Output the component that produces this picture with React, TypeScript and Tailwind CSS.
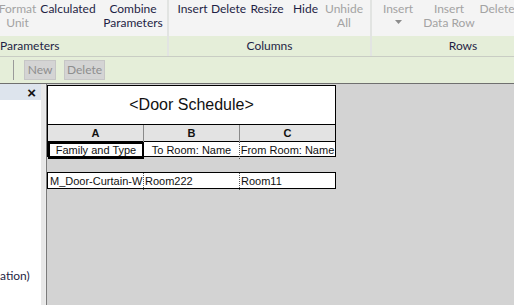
import React from "react";

const font = { fontFamily: 'Lato, "Noto Sans", sans-serif' };
const arial = { fontFamily: '"Liberation Sans", Arial, sans-serif' };

function RibbonButton({ w, lines, off }: { w: string; lines: string[]; off?: boolean }) {
  return (
    <div
      className={`${w} flex shrink-0 flex-col items-center pt-[2px] text-[12px] leading-[14px] whitespace-nowrap ${
        off ? "text-[#a3a3a3]" : "text-[#1f1f45]"
      }`}
    >
      {lines.map((l, i) => (
        <div key={i} className="flex w-full justify-center">
          {l}
        </div>
      ))}
    </div>
  );
}

function Group({
  w,
  label,
  children,
  last,
  left,
}: {
  w: string;
  label: string;
  children: React.ReactNode;
  last?: boolean;
  left?: boolean;
}) {
  return (
    <div className={`${w} flex shrink-0 flex-col ${last ? "" : "border-r-2 border-[#e2e4e2]"}`}>
      <div className="flex h-[36px] bg-[#f4f4f4]">{children}</div>
      <div
        className={`flex h-[20px] items-center bg-[#e5eed9] text-[12px] text-[#1f1f45] ${
          left ? "justify-start" : "justify-center"
        }`}
      >
        {label}
      </div>
    </div>
  );
}

export default function App() {
  return (
    <div className="flex h-[305px] w-[514px] flex-col overflow-hidden bg-[#d3d3d3]" style={font}>
      {/* ribbon */}
      <div className="flex h-[57px] shrink-0 border-b border-[#c9cdc4]">
        <Group w="w-[169px]" label="Parameters" left>
          <div className="ml-[-1px] flex">
            <RibbonButton w="w-[37px]" lines={["Format", "Unit"]} off />
            <RibbonButton w="w-[64px]" lines={["Calculated"]} />
            <RibbonButton w="w-[66px]" lines={["Combine", "Parameters"]} />
          </div>
        </Group>
        <Group w="w-[203px]" label="Columns">
          <RibbonButton w="w-[47px]" lines={["Insert"]} />
          <RibbonButton w="w-[25px]" lines={["Delete"]} />
          <RibbonButton w="w-[52px]" lines={["Resize"]} />
          <RibbonButton w="w-[25px]" lines={["Hide"]} />
          <RibbonButton w="w-[52px]" lines={["Unhide", "All"]} off />
        </Group>
        <Group w="w-[182px]" label="Rows" last>
          <div className="flex w-[52px] shrink-0 flex-col items-center pt-[2px] text-[12px] leading-[14px] text-[#a3a3a3]">
            <div>Insert</div>
            <svg width="7" height="4" viewBox="0 0 7 4" className="mt-[4px]">
              <path d="M0 0h7L3.5 4z" fill="#8d8d8d" />
            </svg>
          </div>
          <RibbonButton w="w-[50px]" lines={["Insert", "Data Row"]} off />
          <RibbonButton w="w-[46px]" lines={["Delete"]} off />
        </Group>
      </div>

      {/* toolbar */}
      <div className="flex h-[27px] shrink-0 items-center border-b border-[#6f6f6f] bg-[#e5eed9]">
        <div className="ml-[13px] h-[20px] w-[1px] bg-[#9a9a9a]" />
        <div className="ml-[10px] flex h-[20px] w-[32px] items-center justify-center border border-[#c6c6c6] bg-[#d4d4d4] text-[12px] text-[#8e8e8e]">
          New
        </div>
        <div className="ml-[8px] flex h-[20px] w-[41px] items-center justify-center border border-[#c6c6c6] bg-[#d4d4d4] text-[12px] text-[#8e8e8e]">
          Delete
        </div>
      </div>

      {/* body */}
      <div className="flex flex-1">
        <div className="flex w-[41px] shrink-0 flex-col bg-white">
          <div
            className="flex h-[16px] items-center justify-end bg-[#dde4ed] pr-[5px] text-[15px] font-bold leading-none text-[#111]"
            style={arial}
          >
            ×
          </div>
          <div className="flex-1" />
          <div className="mb-[22px] text-[12px] leading-[14px] text-[#1f1f45]">ation)</div>
        </div>
        <div className="w-[5px] shrink-0 border-r border-[#ececec] bg-[#e8e8e8]" />
        <div className="w-[1px] shrink-0 bg-[#7b7b7b]" />
        <div className="flex-1 pt-[1px]" style={arial}>
          <div className="w-[289px] border border-black bg-white">
            <div className="flex h-[39px] items-center justify-center border-b border-black text-[16px] text-[#111]">
              &lt;Door Schedule&gt;
            </div>
            <div className="grid h-[16px] grid-cols-[96px_96px_95px] bg-[#e3e3e3] text-[11px] font-bold text-[#111]">
              <div className="flex items-center justify-center border-r border-[#8a8a8a]">A</div>
              <div className="flex items-center justify-center border-r border-[#8a8a8a]">B</div>
              <div className="flex items-center justify-center">C</div>
            </div>
            <div className="grid h-[15px] grid-cols-[96px_96px_95px] border-t border-black bg-white text-[11px] text-[#111]">
              <div className="flex items-center justify-center border-2 border-black leading-none">Family and Type</div>
              <div className="flex items-center justify-center border-r border-dotted border-[#555]">To Room: Name</div>
              <div className="flex items-center justify-center">From Room: Name</div>
            </div>
          </div>
          <div className="mt-[15px] w-[289px] border border-black bg-white">
            <div className="grid h-[15px] grid-cols-[96px_96px_95px] text-[11px] text-[#111]">
              <div className="flex items-center overflow-hidden whitespace-nowrap border-r border-dotted border-[#555] pl-[2px]">
                M_Door-Curtain-W
              </div>
              <div className="flex items-center border-r border-dotted border-[#555] pl-[1px]">Room222</div>
              <div className="flex items-center pl-[1px]">Room11</div>
            </div>
          </div>
        </div>
      </div>
    </div>
  );
}
